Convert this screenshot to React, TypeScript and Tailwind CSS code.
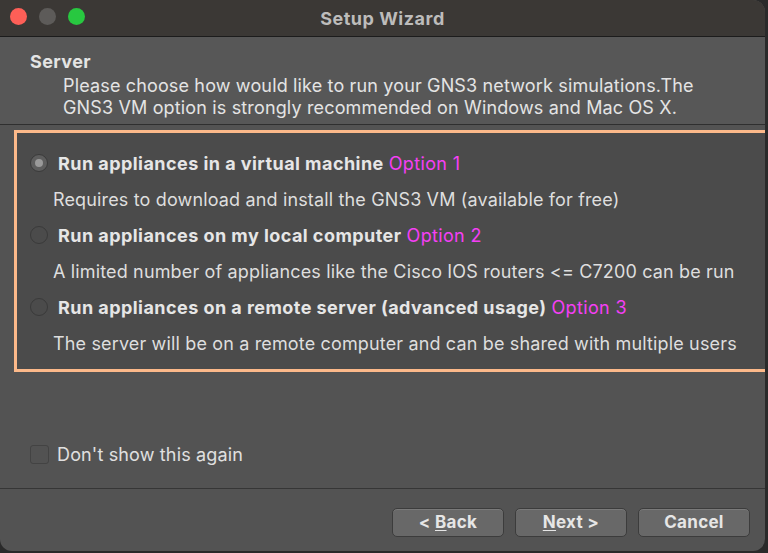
import React, { useState } from "react";

const options = [
  {
    label: "Run appliances in a virtual machine",
    tag: "Option 1",
    desc: "Requires to download and install the GNS3 VM (available for free)",
  },
  {
    label: "Run appliances on my local computer",
    tag: "Option 2",
    desc: "A limited number of appliances like the Cisco IOS routers <= C7200 can be run",
  },
  {
    label: "Run appliances on a remote server (advanced usage)",
    tag: "Option 3",
    desc: "The server will be on a remote computer and can be shared with multiple users",
  },
];

const WizardButton: React.FC<{ children: React.ReactNode }> = ({ children }) => (
  <button className="h-[29px] w-[112px] rounded-[5px] border border-[#3c3c3c] bg-[#686868] text-[17px] font-bold tracking-[0.3px] text-[#e6e6e6] shadow-[inset_0_1px_0_#7a7a7a]">
    {children}
  </button>
);

export default function App() {
  const [selected, setSelected] = useState(0);
  const [dontShow, setDontShow] = useState(false);

  return (
    <div
      className="h-[553px] w-[768px] overflow-hidden bg-[#2a2a2a]"
      style={{ fontFamily: "Inter, 'Liberation Sans', sans-serif" }}
    >
      <div className="flex h-[551px] w-[765px] flex-col overflow-hidden rounded-br-[12px] rounded-tr-[12px] rounded-bl-[12px] bg-[#535353]">
        {/* title bar */}
        <div className="relative flex h-[37px] shrink-0 items-center justify-center border-b border-[#1c1c1c] bg-[#3b3835]">
          <div className="absolute left-[10px] top-[8px] flex gap-[12px]">
            <span className="h-[17px] w-[17px] rounded-full bg-[#fe5f57]" />
            <span className="h-[17px] w-[17px] rounded-full bg-[#5d5b59]" />
            <span className="h-[17px] w-[17px] rounded-full bg-[#28c840]" />
          </div>
          <span className="text-[18px] font-bold tracking-[0.5px] text-[#bdbcbb]">Setup Wizard</span>
        </div>

        {/* header */}
        <div className="h-[88px] shrink-0 border-b border-[#2f2f2f] bg-[#575757] pl-[30px] pt-[14px] text-[18px] leading-[22px] tracking-[0.15px] text-[#e4e4e4]">
          <div className="font-bold tracking-[0.4px]">Server</div>
          <div className="pl-[33px] pt-[2px]">
            Please choose how would like to run your GNS3 network simulations.The
            <br />
            GNS3 VM option is strongly recommended on Windows and Mac OS X.
          </div>
        </div>

        {/* options */}
        <div className="relative flex-1">
          <div className="ml-[14px] mr-[-6px] mt-[5px] border-[3px] border-[#fcb98a] bg-[#4b4b4b] pb-[8px] pt-[12px]">
            {options.map((o, i) => (
              <div key={o.label}>
                <label
                  className="flex h-[36px] cursor-pointer items-center"
                  onClick={() => setSelected(i)}
                >
                  <span
                    className={
                      "ml-[13px] mr-[10px] flex h-[18px] w-[18px] items-center justify-center rounded-full border " +
                      (selected === i
                        ? "border-[#3a3a3a] bg-[#5e5e5e]"
                        : "border-[#3a3a3a] bg-[#4b4b4b]")
                    }
                  >
                    {selected === i && <span className="h-[8px] w-[8px] rounded-full bg-[#9a9a9a]" />}
                  </span>
                  <span className="text-[18px] font-bold tracking-[0.45px] text-[#e6e6e6]">{o.label}</span>
                  <span className="ml-[5px] text-[18px] tracking-[0.35px] text-[#f53ff5]">{o.tag}</span>
                </label>
                <div className="flex h-[36px] items-center pl-[36px] text-[18px] tracking-[0.15px] text-[#dedede]">
                  {o.desc}
                </div>
              </div>
            ))}
          </div>

          <label className="mt-[69px] flex items-center pl-[30px]" onClick={() => setDontShow(!dontShow)}>
            <span className="mr-[8px] h-[19px] w-[19px] rounded-[3px] border border-[#434343] bg-[#525252]" />
            <span className="text-[18px] tracking-[0.15px] text-[#e0e0e0]">Don't show this again</span>
          </label>
        </div>

        {/* footer */}
        <div className="flex h-[63px] shrink-0 items-start justify-end gap-[11px] border-t border-[#363636] pr-[15px] pt-[19px]">
          <WizardButton>
            &lt; <span className="underline underline-offset-2">B</span>ack
          </WizardButton>
          <WizardButton>
            <span className="underline underline-offset-2">N</span>ext &gt;
          </WizardButton>
          <WizardButton>Cancel</WizardButton>
        </div>
      </div>
    </div>
  );
}
